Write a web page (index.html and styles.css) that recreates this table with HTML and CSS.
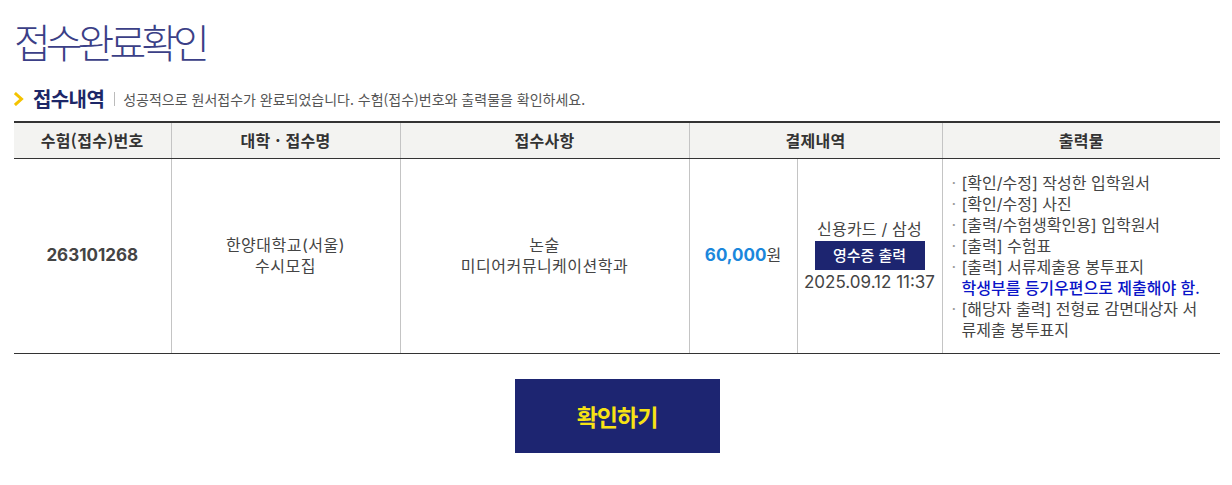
FILE: index.html
```html
<!DOCTYPE html>
<html lang="ko">
<head>
<meta charset="utf-8">
<title>접수완료확인</title>
<link rel="stylesheet" href="styles.css">
</head>
<body>
<div class="page">
  <h1 class="page-title">접수완료확인</h1>
  <div class="section-head">
    <svg class="chev" width="10" height="14" viewBox="0 0 10 14"><polyline points="2,2 7.5,7 2,12" fill="none" stroke="#f4c300" stroke-width="3" stroke-linecap="square"/></svg>
    <h2 class="section-title">접수내역</h2>
    <span class="sep"></span>
    <p class="section-desc">성공적으로 원서접수가 완료되었습니다. 수험(접수)번호와 출력물을 확인하세요.</p>
  </div>
  <table class="result">
    <colgroup>
      <col class="c1"><col class="c2"><col class="c3"><col class="c4"><col class="c5"><col class="c6">
    </colgroup>
    <thead>
      <tr>
        <th>수험(접수)번호</th>
        <th>대학 · 접수명</th>
        <th>접수사항</th>
        <th colspan="2">결제내역</th>
        <th>출력물</th>
      </tr>
    </thead>
    <tbody>
      <tr>
        <td class="num">263101268</td>
        <td class="txt">한양대학교(서울)<br>수시모집</td>
        <td class="txt">논술<br>미디어커뮤니케이션학과</td>
        <td class="amount"><strong>60,000</strong>원</td>
        <td class="pay">
          <div class="pay-method">신용카드 / 삼성</div>
          <span class="receipt">영수증 출력</span>
          <div class="pay-date">2025.09.12 11:37</div>
        </td>
        <td class="outputs">
          <ul class="out-list">
            <li><span class="dot">·</span><span>[확인/수정] 작성한 입학원서</span></li>
            <li><span class="dot">·</span><span>[확인/수정] 사진</span></li>
            <li><span class="dot">·</span><span>[출력/수험생확인용] 입학원서</span></li>
            <li><span class="dot">·</span><span>[출력] 수험표</span></li>
            <li><span class="dot">·</span><span>[출력] 서류제출용 봉투표지<br><em class="notice">학생부를 등기우편으로 제출해야 함.</em></span></li>
            <li><span class="dot">·</span><span>[해당자 출력] 전형료 감면대상자 서류제출 봉투표지</span></li>
          </ul>
        </td>
      </tr>
    </tbody>
  </table>
  <div class="actions">
    <button class="confirm-btn" type="button">확인하기</button>
  </div>
</div>
</body>
</html>
```

FILE: styles.css
```css
* { box-sizing: border-box; }
html, body { margin: 0; padding: 0; background: #fff; }
body {
  font-family: Inter, "Noto Sans CJK KR", sans-serif;
  color: #444;
}
.page {
  padding: 14px 12px 0 14px;
  width: 1232px;
}
.page-title {
  margin: 0;
  font-family: "Noto Sans CJK KR", sans-serif;
  font-weight: 300;
  font-size: 40px;
  letter-spacing: -5px;
  line-height: 54px;
  color: #3b3f87;
}
.section-head {
  display: flex;
  align-items: center;
  margin-top: 14px;
  height: 32px;
}
.chev { margin-right: 9px; margin-top: 2px; }
.section-title {
  margin: 0;
  font-family: "Noto Sans CJK KR", sans-serif;
  font-weight: 700;
  font-size: 20px;
  letter-spacing: -0.6px;
  color: #1d2768;
}
.sep {
  width: 1px;
  height: 14px;
  background: #bbb;
  margin: 2px 8px 0 10px;
}
.section-desc {
  margin: 2px 0 0;
  font-family: "Noto Sans CJK KR", sans-serif;
  font-size: 14px;
  color: #555;
  letter-spacing: 0;
}
.result {
  margin-top: 7px;
  width: 1206px;
  border-collapse: collapse;
  table-layout: fixed;
  border-top: 2px solid #333;
}
.c1 { width: 157px; } .c2 { width: 229px; } .c3 { width: 289px; }
.c4 { width: 108px; } .c5 { width: 145px; } .c6 { width: 278px; }
.result th {
  background: #f3f3f1;
  height: 36px;
  font-family: "Noto Sans CJK KR", sans-serif;
  font-weight: 700;
  font-size: 16px;
  letter-spacing: 0.3px;
  color: #333;
  border-bottom: 1px solid #333;
  border-left: 1px solid #c4c4c4;
  padding: 0;
}
.result th:first-child, .result td:first-child { border-left: 0; }
.result td {
  border-left: 1px solid #c4c4c4;
  border-bottom: 1px solid #333;
  text-align: center;
  vertical-align: middle;
  font-size: 16px;
  line-height: 21px;
  color: #444;
}
.result td.num {
  font-family: Inter, sans-serif;
  font-weight: 700;
  font-size: 17px;
  color: #444;
}
.result td.txt { letter-spacing: 0.5px; }
.amount { font-size: 16px; }
.amount strong {
  color: #1b87dc;
  font-weight: 700;
  font-size: 17px;
  letter-spacing: 0;
}
.pay { padding: 0 2px; }
.pay-method { font-size: 16px; line-height: 20px; letter-spacing: 0.2px; }
.receipt {
  display: inline-block;
  width: 110px;
  height: 29px;
  line-height: 29px;
  margin-top: 2px;
  background: #1d2570;
  color: #fff;
  font-size: 15px;
  font-weight: 500;
}
.pay-date {
  font-size: 17px;
  line-height: 22px;
  margin-top: 1px;
}
.outputs { padding: 14px 10px 12px 9px; }
.result td.outputs { text-align: left; line-height: 21px; }
.out-list { list-style: none; margin: 0; padding: 0; }
.out-list li { display: flex; }
.dot {
  flex: 0 0 10px;
  color: #999;
}
.notice {
  font-style: normal;
  color: #0a14c8;
  font-weight: 500;
}
.actions {
  display: flex;
  justify-content: center;
  width: 1206px;
  margin-top: 25px;
}
.confirm-btn {
  width: 205px;
  height: 74px;
  border: 0;
  background: #1d2571;
  color: #f7e214;
  font-family: "Noto Sans CJK KR", sans-serif;
  font-weight: 700;
  font-size: 23px;
  letter-spacing: -1px;
  cursor: pointer;
}
```
